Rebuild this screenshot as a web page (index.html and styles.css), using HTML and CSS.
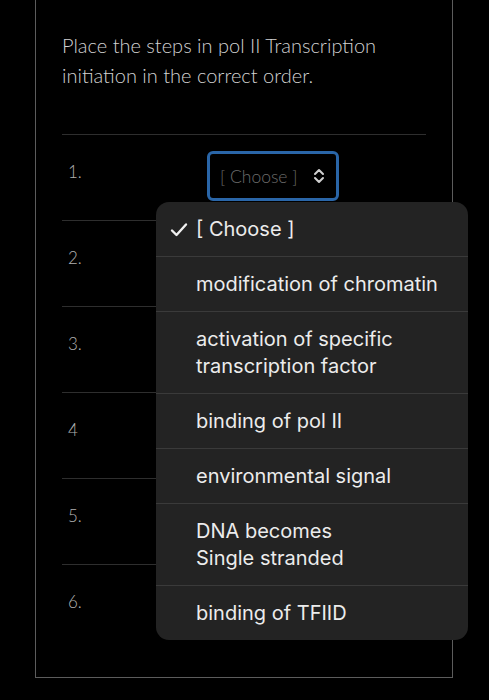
FILE: index.html
```html
<!DOCTYPE html>
<html>
<head>
  <title>pol II Transcription</title>
  <link rel="stylesheet" href="styles.css">
</head>
<body>
  <div class="card">
    <p class="question">Place the steps in pol II Transcription initiation in the correct order.</p>
    <div class="rows">
      <div class="row">
        <span class="num">1.</span>
        <div class="select">
          <span class="select-text">[ Choose ]</span>
          <svg class="updown" width="12" height="16" viewBox="0 0 12 16">
            <polyline points="2,6 6,2 10,6" fill="none" stroke="#d0d0d0" stroke-width="2" stroke-linecap="round" stroke-linejoin="round"/>
            <polyline points="2,10 6,14 10,10" fill="none" stroke="#d0d0d0" stroke-width="2" stroke-linecap="round" stroke-linejoin="round"/>
          </svg>
        </div>
      </div>
      <div class="row"><span class="num">2.</span></div>
      <div class="row"><span class="num">3.</span></div>
      <div class="row"><span class="num">4</span></div>
      <div class="row"><span class="num">5.</span></div>
      <div class="row"><span class="num">6.</span></div>
    </div>

    <ul class="menu">
      <li class="menu-item selected">
        <svg class="check" width="18" height="16" viewBox="0 0 18 16">
          <polyline points="2,8.5 6.5,13 16,2.5" fill="none" stroke="#f0f0f0" stroke-width="2.4" stroke-linecap="round" stroke-linejoin="round"/>
        </svg>
        <span>[ Choose ]</span>
      </li>
      <li class="menu-item">modification of chromatin</li>
      <li class="menu-item">activation of specific<br>transcription factor</li>
      <li class="menu-item">binding of pol II</li>
      <li class="menu-item">environmental signal</li>
      <li class="menu-item">DNA becomes<br>Single stranded</li>
      <li class="menu-item">binding of TFIID</li>
    </ul>
  </div>
</body>
</html>
```

FILE: styles.css
```css
body {
  margin: 0;
  background-color: #000;
}

.card {
  position: relative;
  width: 418px;
  height: 678px;
  margin-left: 35px;
  padding: 30px 26px 0;
  border: 1px solid #5c5c5c;
  border-top: none;
  box-sizing: border-box;
}

.question {
  margin: 0;
  padding-bottom: 44px;
  font-family: Lato, "Open Sans", sans-serif;
  font-weight: 300;
  font-size: 20px;
  line-height: 30px;
  color: #d2d2d2;
  border-bottom: 1px solid #2e2e2e;
}

.row {
  display: flex;
  height: 86px;
  padding-left: 6px;
  border-bottom: 1px solid #2e2e2e;
  box-sizing: border-box;
  font-family: Lato, "Open Sans", sans-serif;
  font-weight: 300;
}

.row:last-child {
  border-bottom: none;
}

.num {
  width: 139px;
  padding-top: 26px;
  font-size: 17px;
  color: #b0b0b0;
}

.select {
  display: flex;
  align-items: center;
  width: 132px;
  height: 50px;
  margin-top: 16px;
  padding: 0 10px;
  border: 3px solid #2a66a8;
  border-radius: 6px;
  box-sizing: border-box;
}

.select-text {
  flex: 1;
  font-size: 17.5px;
  color: #6c6c6c;
}

.updown {
  margin-right: 1px;
}

.menu {
  position: absolute;
  top: 202px;
  left: 120px;
  width: 312px;
  margin: 0;
  padding: 0;
  list-style: none;
  background-color: #232323;
  border-radius: 13px;
  overflow: hidden;
  font-family: Inter, "Liberation Sans", sans-serif;
  font-size: 20px;
  line-height: 27px;
  color: #ececec;
}

.menu-item {
  padding: 14px 20px 13px 40px;
  border-top: 1px solid #3a3a3a;
}

.menu-item:first-child {
  border-top: none;
}

.menu-item.selected {
  display: flex;
  align-items: center;
  padding-left: 14px;
}

.check {
  margin-right: 8px;
}
```
